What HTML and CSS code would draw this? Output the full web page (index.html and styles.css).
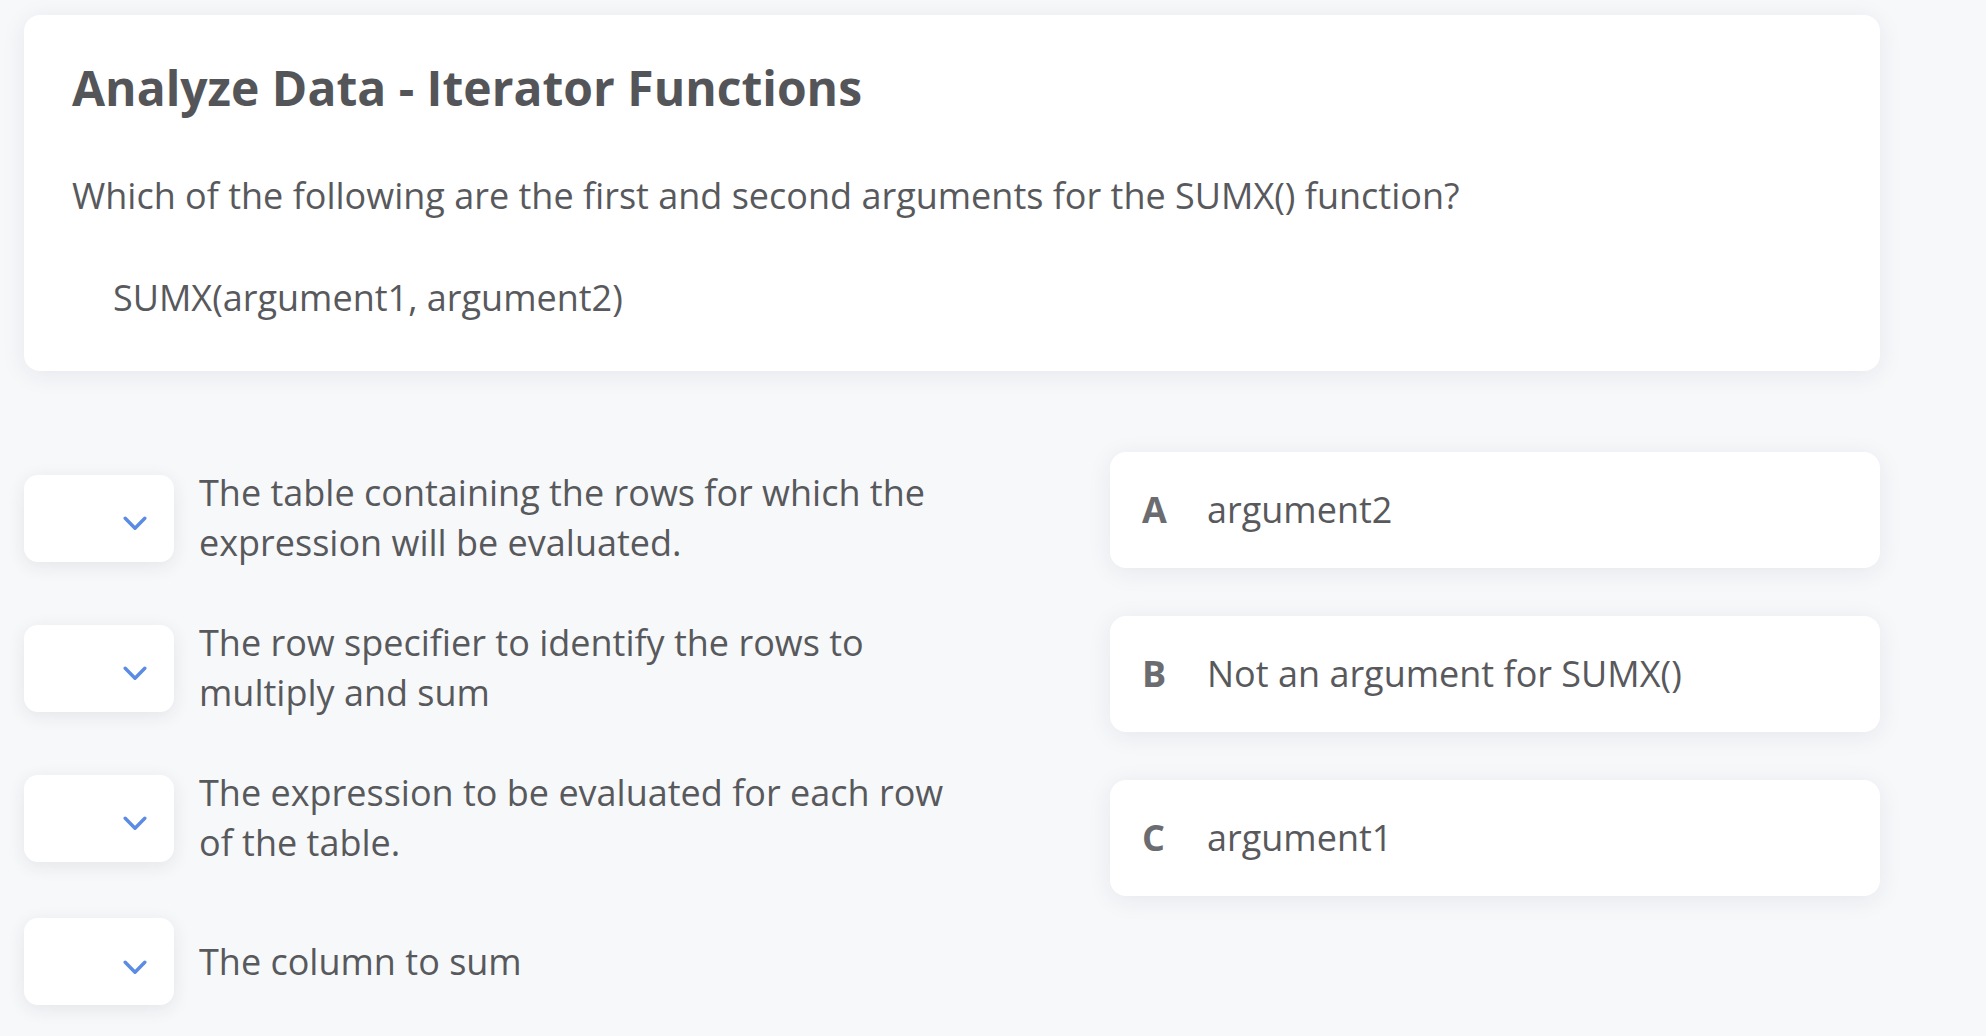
FILE: index.html
```html
<!DOCTYPE html>
<html lang="en">
<head>
<meta charset="utf-8">
<title>Analyze Data - Iterator Functions</title>
<link rel="stylesheet" href="styles.css">
</head>
<body>
<div class="page">
  <section class="question-card">
    <h1 class="title">Analyze Data - Iterator Functions</h1>
    <p class="prompt">Which of the following are the first and second arguments for the SUMX() function?</p>
    <p class="code">SUMX(argument1, argument2)</p>
  </section>

  <section class="match">
    <div class="targets">
      <div class="row">
        <div class="select"><svg class="chev" viewBox="0 0 24 15" width="24" height="15"><path d="M2.2 2.2 L12 12.2 L21.8 2.2" fill="none" stroke="#5b8ce3" stroke-width="3.4" stroke-linecap="round" stroke-linejoin="round"/></svg></div>
        <div class="row-text">The table containing the rows for which the expression will be evaluated.</div>
      </div>
      <div class="row">
        <div class="select"><svg class="chev" viewBox="0 0 24 15" width="24" height="15"><path d="M2.2 2.2 L12 12.2 L21.8 2.2" fill="none" stroke="#5b8ce3" stroke-width="3.4" stroke-linecap="round" stroke-linejoin="round"/></svg></div>
        <div class="row-text">The row specifier to identify the rows to multiply and sum</div>
      </div>
      <div class="row">
        <div class="select"><svg class="chev" viewBox="0 0 24 15" width="24" height="15"><path d="M2.2 2.2 L12 12.2 L21.8 2.2" fill="none" stroke="#5b8ce3" stroke-width="3.4" stroke-linecap="round" stroke-linejoin="round"/></svg></div>
        <div class="row-text">The expression to be evaluated for each row of the table.</div>
      </div>
      <div class="row">
        <div class="select"><svg class="chev" viewBox="0 0 24 15" width="24" height="15"><path d="M2.2 2.2 L12 12.2 L21.8 2.2" fill="none" stroke="#5b8ce3" stroke-width="3.4" stroke-linecap="round" stroke-linejoin="round"/></svg></div>
        <div class="row-text">The column to sum</div>
      </div>
    </div>
    <div class="options">
      <div class="option"><span class="letter">A</span><span class="opt-text">argument2</span></div>
      <div class="option"><span class="letter">B</span><span class="opt-text">Not an argument for SUMX()</span></div>
      <div class="option"><span class="letter">C</span><span class="opt-text">argument1</span></div>
    </div>
  </section>
</div>
</body>
</html>
```

FILE: styles.css
```css
* { box-sizing: border-box; }
html, body { margin: 0; padding: 0; }
body {
  background: #f7f8fa;
  font-family: "Open Sans", "Noto Sans", sans-serif;
  color: #58595c;
  width: 1986px;
  height: 1036px;
  overflow: hidden;
}
.page {
  padding: 15px 106px 0 24px;
}
.question-card {
  background: #fff;
  border-radius: 16px;
  box-shadow: 0 4px 24px rgba(30, 40, 60, 0.08);
  padding: 45px 48px 40px 48px;
  height: 356px;
}
.title {
  margin: 0;
  font-size: 48px;
  font-weight: 700;
  line-height: 56px;
  color: #545559;
}
.prompt {
  margin: 55px 0 0 0;
  font-size: 36px;
  line-height: 50px;
}
.code {
  margin: 52px 0 0 41px;
  font-size: 36px;
  line-height: 50px;
}
.match {
  display: flex;
  margin-top: 81px;
}
.targets {
  flex: 1;
  display: flex;
  flex-direction: column;
  gap: 50px;
  padding-top: 16px;
}
.row {
  display: flex;
  align-items: center;
  gap: 25px;
}
.select {
  width: 150px;
  height: 87px;
  flex: none;
  background: #fff;
  border-radius: 14px;
  box-shadow: 0 4px 18px rgba(30, 40, 60, 0.09);
  display: flex;
  align-items: center;
  justify-content: flex-end;
  padding-right: 27px;
  padding-top: 11px;
}
.chev { display: block; }
.row-text {
  max-width: 760px;
  font-size: 36px;
  line-height: 50px;
}
.options {
  width: 770px;
  flex: none;
  display: flex;
  flex-direction: column;
  gap: 48px;
}
.option {
  height: 116px;
  background: #fff;
  border-radius: 16px;
  box-shadow: 0 4px 24px rgba(30, 40, 60, 0.08);
  display: flex;
  align-items: center;
  padding-left: 32px;
  padding-bottom: 2px;
}
.letter {
  width: 65px;
  flex: none;
  font-weight: 700;
  font-size: 36px;
  color: #6b6c70;
}
.opt-text {
  font-size: 36px;
}
```
